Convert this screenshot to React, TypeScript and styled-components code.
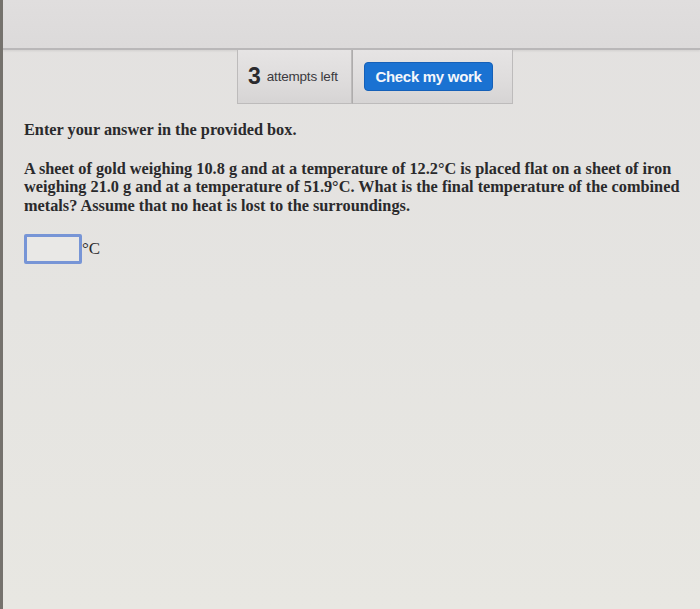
import React from "react";
import styled, { createGlobalStyle } from "styled-components";

const Global = createGlobalStyle`
  html, body { margin: 0; padding: 0; }
  body { background: #e5e3e0; }
`;

const Page = styled.div`
  width: 700px;
  height: 609px;
  box-sizing: border-box;
  border-left: 3px solid #75726d;
  background: linear-gradient(180deg, #e3e1e0 0%, #e5e4e1 50%, #e8e7e2 100%);
  display: flex;
  flex-direction: column;
  overflow: hidden;
`;

const TopBar = styled.div`
  height: 48px;
  background: linear-gradient(180deg, #e0dede 0%, #dcdada 100%);
  border-bottom: 2px solid #b9b7b8;
  box-shadow: 0 1px 2px rgba(0, 0, 0, 0.08);
`;

const Toolbar = styled.div`
  display: flex;
  padding-left: 234px;
`;

const Cell = styled.div<{ $w: number }>`
  width: ${(p) => p.$w}px;
  height: 54px;
  box-sizing: border-box;
  border: 1px solid #bdbbbb;
  border-top: none;
  background: linear-gradient(180deg, #e6e4e4 0%, #dedcdc 60%, #d6d4d4 100%);
  display: flex;
  align-items: center;
  & + & { border-left: 1px solid #aeacac; }
`;

const Attempts = styled(Cell)`
  padding-left: 10px;
  gap: 6px;
`;

const Count = styled.span`
  font-family: "Liberation Sans", Arial, sans-serif;
  font-weight: bold;
  font-size: 23px;
  color: #2b2a2e;
`;

const AttemptsText = styled.span`
  font-family: "Liberation Sans", Arial, sans-serif;
  font-size: 13.5px;
  color: #3b3a40;
  letter-spacing: -0.2px;
`;

const CheckCell = styled(Cell)`
  padding-left: 11px;
`;

const CheckButton = styled.button`
  width: 129px;
  height: 29px;
  border: 1px solid #1560b8;
  border-radius: 4px;
  background: #1a72d2;
  color: #f4f6fb;
  font-family: "Liberation Sans", Arial, sans-serif;
  font-weight: bold;
  font-size: 15px;
  letter-spacing: -0.3px;
  padding: 0;
  cursor: pointer;
`;

const Content = styled.div`
  padding: 16px 0 0 21px;
  font-family: "Liberation Serif", "Times New Roman", serif;
  font-weight: bold;
  font-size: 16.3px;
  color: #2a2a2c;
`;

const Instruction = styled.p`
  margin: 0;
  line-height: 20px;
`;

const Question = styled.p`
  margin: 20px 0 0;
  line-height: 18.3px;
  width: 670px;
`;

const AnswerRow = styled.div`
  display: flex;
  align-items: flex-start;
  margin-top: 19px;
`;

const AnswerBox = styled.input`
  width: 58px;
  height: 30px;
  box-sizing: border-box;
  border: 3px solid #7795d6;
  border-radius: 2px;
  background: #e9e8e6;
  padding: 0;
  outline: none;
`;

const Unit = styled.span`
  font-family: "Liberation Serif", "Times New Roman", serif;
  font-weight: normal;
  font-size: 17px;
  margin-top: 5px;
  margin-left: 0px;
  color: #2a2a2c;
`;

export default function App() {
  return (
    <>
      <Global />
      <Page>
        <TopBar />
        <Toolbar>
          <Attempts $w={115}>
            <Count>3</Count>
            <AttemptsText>attempts left</AttemptsText>
          </Attempts>
          <CheckCell $w={161}>
            <CheckButton>Check my work</CheckButton>
          </CheckCell>
        </Toolbar>
        <Content>
          <Instruction>Enter your answer in the provided box.</Instruction>
          <Question>
            A sheet of gold weighing 10.8 g and at a temperature of 12.2°C is placed flat on a sheet of iron
            weighing 21.0 g and at a temperature of 51.9°C. What is the final temperature of the combined
            metals? Assume that no heat is lost to the surroundings.
          </Question>
          <AnswerRow>
            <AnswerBox aria-label="answer" />
            <Unit>°C</Unit>
          </AnswerRow>
        </Content>
      </Page>
    </>
  );
}
